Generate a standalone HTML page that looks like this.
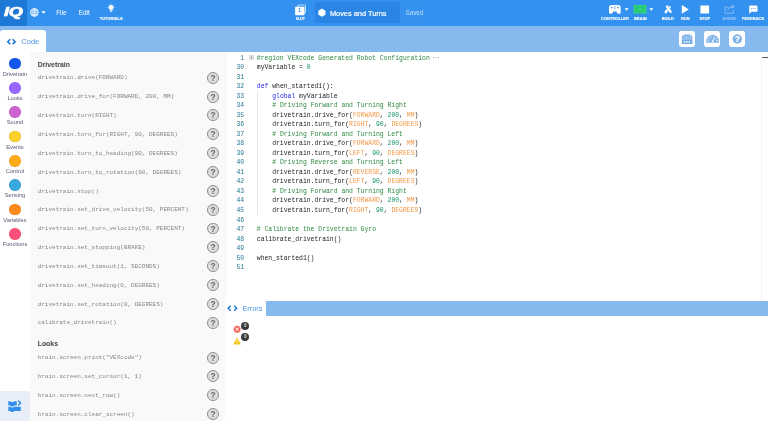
<!DOCTYPE html>
<html lang="en">
<head>
<meta charset="utf-8">
<title>VEXcode IQ - Moves and Turns</title>
<style>
*{box-sizing:border-box;margin:0;padding:0}
html,body{width:768px;height:421px;overflow:hidden;background:#fff}
body{position:relative;font-family:"Liberation Sans",sans-serif;color:#333}
.abs{position:absolute}
#topbar{position:absolute;left:0;top:0;width:768px;height:25.600px;background:#3391ef}
#logo{position:absolute;left:0;top:0;width:26.700px;height:25.600px;background:#1d78d6}
#logo span{position:absolute;left:3.6px;top:6.3px;font:italic bold 12px/12px "Liberation Sans",sans-serif;color:#fff;letter-spacing:-0.2px;-webkit-text-stroke:0.7px #fff;transform:scaleX(1.5);transform-origin:0 50%}
.menu{position:absolute;top:8px;font-size:6.4px;line-height:9px;color:#fff}
.tlabel{position:absolute;top:17.3px;font-size:4px;line-height:4px;font-weight:bold;-webkit-text-stroke:0.12px currentColor;color:#fff;text-align:center;white-space:nowrap;transform:translateX(-50%)}
.tlabel.dim{color:#8fc1f5}
#proj{position:absolute;left:315.200px;top:2.400px;width:84.500px;height:21px;background:#2a85e5;border-radius:2px 0 0 2px}
#proj span{position:absolute;left:14.7px;top:6.3px;font-size:7.4px;line-height:10px;color:#fff;-webkit-text-stroke:0.2px #fff;white-space:nowrap}
#saved{position:absolute;left:399.700px;top:2.400px;width:26px;height:21px;background:#3592ef;border-radius:0 2px 2px 0}
#saved span{position:absolute;left:5.800px;top:5.900px;font-size:6.3px;line-height:9px;color:#c3defa;white-space:nowrap}
#bar2{position:absolute;left:0;top:25.600px;width:768px;height:26.600px;background:#86baee}
#codetab{position:absolute;left:0;top:30px;width:46px;height:22px;background:#fff;border-radius:3px 3px 0 0}
#codetab span{position:absolute;left:21.2px;top:6.6px;font-size:7.6px;line-height:10px;color:#4b97e4}
.sqbtn{position:absolute;top:31px;width:16.1px;height:16.4px;background:#fff;border-radius:2.4px}
#leftcol{position:absolute;left:0;top:52px;width:29.5px;height:369px;background:#fff}
#list{position:absolute;left:29.5px;top:52px;width:197.1px;height:369px;background:#f9f9f9}
.cat{position:absolute;left:0;width:30px;text-align:center}
.cat i{display:block;width:11.7px;height:11.7px;border-radius:50%;margin:0 auto;position:relative;left:-0.2px;box-shadow:inset 0 0 0 0.5px rgba(0,0,0,0.13)}
.cat b{display:block;font-weight:normal;font-size:5.7px;line-height:6px;margin-top:1.2px;color:#555c70;white-space:nowrap}
.hd{position:absolute;left:37.7px;font-size:6.9px;line-height:9px;font-weight:bold;color:#444;white-space:nowrap}
.it{position:absolute;left:37.7px;font-family:"Liberation Mono",monospace;font-size:5.99px;line-height:8px;color:#858585;white-space:nowrap}
.q{position:absolute;left:207.05px;width:11.9px;height:11.9px;border-radius:50%;background:#dedede;border:0.8px solid #8c8c8c;color:#666;font-size:8.4px;line-height:10.6px;text-align:center;font-weight:bold}
#toolbox{position:absolute;left:0;top:391.200px;width:29.500px;height:30px;background:#e8eff8}
#editor{position:absolute;left:226.6px;top:52px;width:541.4px;height:249px;background:#fff}
.ln{position:absolute;left:225px;width:19.2px;text-align:right;font-family:"Liberation Mono",monospace;font-size:6.4px;line-height:9.52px;color:#237893;white-space:pre}
.cl{position:absolute;left:256.8px;font-family:"Liberation Mono",monospace;font-size:6.42px;line-height:9.52px;color:#222;white-space:pre}
.cm{color:#2e8a42}.kw{color:#1c1ce8}.cn{color:#f39a4a}.nm{color:#179267}
#errbar{position:absolute;left:225px;top:301px;width:543px;height:15px;background:#86baee}
#errtab{position:absolute;left:225px;top:301px;width:40.5px;height:15px;background:#fff}
#errtab span{position:absolute;left:17.4px;top:3px;font-size:7.4px;line-height:9px;color:#4b97e4}
#console{position:absolute;left:225px;top:316px;width:543px;height:105px;background:#fff}
.badge{position:absolute;width:8px;height:8px;border-radius:50%;background:#3a3a3a;color:#ddd;font-size:4.6px;line-height:8px;text-align:center;font-weight:bold}
.it,.cl,.ln,.tlabel,.cat b,.hd,.menu,#proj span,#saved span,#codetab span,#errtab span,.q{filter:blur(0.28px)}
</style>
</head>
<body>
<div id="topbar">
  <div id="logo"><span>IQ</span></div>
  <div class="menu" style="left:56.2px">File</div>
  <div class="menu" style="left:78.8px">Edit</div>
  <div class="tlabel" style="left:111.2px">TUTORIALS</div>
  <div class="tlabel" style="left:300.300px;font-size:3.500px;top:17.400px">SLOT</div>
  <div id="proj"><span>Moves and Turns</span></div>
  <div id="saved"><span>Saved</span></div>
  <div class="tlabel" style="left:615px">CONTROLLER</div>
  <div class="tlabel" style="left:640.3px">BRAIN</div>
  <div class="tlabel" style="left:667.8px">BUILD</div>
  <div class="tlabel" style="left:685.3px">RUN</div>
  <div class="tlabel" style="left:704.8px">STOP</div>
  <div class="tlabel dim" style="left:729.3px">SHARE</div>
  <div class="tlabel" style="left:753.2px">FEEDBACK</div>
</div>
<div id="bar2"></div>
<div id="codetab"><span>Code</span></div>
<div class="sqbtn" style="left:679.2px"></div>
<div class="sqbtn" style="left:704.2px"></div>
<div class="sqbtn" style="left:729px"></div>
<div id="leftcol"></div>
<div id="list"></div>
<div id="toolbox"></div>
<div id="editor"></div>
<div id="errbar"></div>
<div id="errtab"><span>Errors</span></div>
<div id="console"></div>
<!--LEFT-->
<div class="cat" style="top:57.65px"><i style="background:#1358ee"></i><b>Drivetrain</b></div>
<div class="cat" style="top:82.00px"><i style="background:#9966ff"></i><b>Looks</b></div>
<div class="cat" style="top:106.35px"><i style="background:#cf63cf"></i><b>Sound</b></div>
<div class="cat" style="top:130.70px"><i style="background:#ffd12b"></i><b>Events</b></div>
<div class="cat" style="top:155.05px"><i style="background:#ffab19"></i><b>Control</b></div>
<div class="cat" style="top:179.40px"><i style="background:#3aa8e0"></i><b>Sensing</b></div>
<div class="cat" style="top:203.75px"><i style="background:#ff8c1a"></i><b>Variables</b></div>
<div class="cat" style="top:228.10px"><i style="background:#ff4f7b"></i><b>Functions</b></div>
<div class="hd" style="top:59.70px">Drivetrain</div>
<div class="it" style="top:74.40px">drivetrain.drive(FORWARD)</div>
<div class="q" style="top:71.75px">?</div>
<div class="it" style="top:93.30px">drivetrain.drive_for(FORWARD, 200, MM)</div>
<div class="q" style="top:90.65px">?</div>
<div class="it" style="top:112.10px">drivetrain.turn(RIGHT)</div>
<div class="q" style="top:109.45px">?</div>
<div class="it" style="top:130.90px">drivetrain.turn_for(RIGHT, 90, DEGREES)</div>
<div class="q" style="top:128.25px">?</div>
<div class="it" style="top:149.70px">drivetrain.turn_to_heading(90, DEGREES)</div>
<div class="q" style="top:147.05px">?</div>
<div class="it" style="top:168.60px">drivetrain.turn_to_rotation(90, DEGREES)</div>
<div class="q" style="top:165.95px">?</div>
<div class="it" style="top:187.50px">drivetrain.stop()</div>
<div class="q" style="top:184.85px">?</div>
<div class="it" style="top:206.30px">drivetrain.set_drive_velocity(50, PERCENT)</div>
<div class="q" style="top:203.65px">?</div>
<div class="it" style="top:225.20px">drivetrain.set_turn_velocity(50, PERCENT)</div>
<div class="q" style="top:222.55px">?</div>
<div class="it" style="top:244.00px">drivetrain.set_stopping(BRAKE)</div>
<div class="q" style="top:241.35px">?</div>
<div class="it" style="top:262.90px">drivetrain.set_timeout(1, SECONDS)</div>
<div class="q" style="top:260.25px">?</div>
<div class="it" style="top:281.70px">drivetrain.set_heading(0, DEGREES)</div>
<div class="q" style="top:279.05px">?</div>
<div class="it" style="top:300.60px">drivetrain.set_rotation(0, DEGREES)</div>
<div class="q" style="top:297.95px">?</div>
<div class="it" style="top:319.40px">calibrate_drivetrain()</div>
<div class="q" style="top:316.75px">?</div>
<div class="hd" style="top:339.30px">Looks</div>
<div class="it" style="top:354.30px">brain.screen.print(&quot;VEXcode&quot;)</div>
<div class="q" style="top:351.65px">?</div>
<div class="it" style="top:373.10px">brain.screen.set_cursor(1, 1)</div>
<div class="q" style="top:370.45px">?</div>
<div class="it" style="top:391.90px">brain.screen.next_row()</div>
<div class="q" style="top:389.25px">?</div>
<div class="it" style="top:410.70px">brain.screen.clear_screen()</div>
<div class="q" style="top:408.05px">?</div>
<!--/LEFT-->
<!--CODE-->
<div class="ln" style="top:53.53px">1</div>
<div class="cl" style="top:53.53px"><span class="cm">#region VEXcode Generated Robot Configuration</span><span style="color:#9a9a9a;letter-spacing:-1.6px"> ···</span></div>
<div class="ln" style="top:63.06px">30</div>
<div class="cl" style="top:63.06px">myVariable = <span class="nm">0</span></div>
<div class="ln" style="top:72.59px">31</div>
<div class="ln" style="top:82.12px">32</div>
<div class="cl" style="top:82.12px"><span class="kw">def</span> when_started1():</div>
<div class="ln" style="top:91.65px">33</div>
<div class="cl" style="top:91.65px">    <span class="kw">global</span> myVariable</div>
<div class="ln" style="top:101.18px">34</div>
<div class="cl" style="top:101.18px">    <span class="cm"># Driving Forward and Turning Right</span></div>
<div class="ln" style="top:110.71px">35</div>
<div class="cl" style="top:110.71px">    drivetrain.drive_for(<span class="cn">FORWARD</span>, <span class="nm">200</span>, <span class="cn">MM</span>)</div>
<div class="ln" style="top:120.24px">36</div>
<div class="cl" style="top:120.24px">    drivetrain.turn_for(<span class="cn">RIGHT</span>, <span class="nm">90</span>, <span class="cn">DEGREES</span>)</div>
<div class="ln" style="top:129.78px">37</div>
<div class="cl" style="top:129.78px">    <span class="cm"># Driving Forward and Turning Left</span></div>
<div class="ln" style="top:139.31px">38</div>
<div class="cl" style="top:139.31px">    drivetrain.drive_for(<span class="cn">FORWARD</span>, <span class="nm">200</span>, <span class="cn">MM</span>)</div>
<div class="ln" style="top:148.84px">39</div>
<div class="cl" style="top:148.84px">    drivetrain.turn_for(<span class="cn">LEFT</span>, <span class="nm">90</span>, <span class="cn">DEGREES</span>)</div>
<div class="ln" style="top:158.37px">40</div>
<div class="cl" style="top:158.37px">    <span class="cm"># Driving Reverse and Turning Left</span></div>
<div class="ln" style="top:167.89px">41</div>
<div class="cl" style="top:167.89px">    drivetrain.drive_for(<span class="cn">REVERSE</span>, <span class="nm">200</span>, <span class="cn">MM</span>)</div>
<div class="ln" style="top:177.43px">42</div>
<div class="cl" style="top:177.43px">    drivetrain.turn_for(<span class="cn">LEFT</span>, <span class="nm">90</span>, <span class="cn">DEGREES</span>)</div>
<div class="ln" style="top:186.95px">43</div>
<div class="cl" style="top:186.95px">    <span class="cm"># Driving Forward and Turning Right</span></div>
<div class="ln" style="top:196.49px">44</div>
<div class="cl" style="top:196.49px">    drivetrain.drive_for(<span class="cn">FORWARD</span>, <span class="nm">200</span>, <span class="cn">MM</span>)</div>
<div class="ln" style="top:206.01px">45</div>
<div class="cl" style="top:206.01px">    drivetrain.turn_for(<span class="cn">RIGHT</span>, <span class="nm">90</span>, <span class="cn">DEGREES</span>)</div>
<div class="ln" style="top:215.55px">46</div>
<div class="ln" style="top:225.07px">47</div>
<div class="cl" style="top:225.07px"><span class="cm"># Calibrate the Drivetrain Gyro</span></div>
<div class="ln" style="top:234.61px">48</div>
<div class="cl" style="top:234.61px">calibrate_drivetrain()</div>
<div class="ln" style="top:244.13px">49</div>
<div class="ln" style="top:253.67px">50</div>
<div class="cl" style="top:253.67px">when_started1()</div>
<div class="ln" style="top:263.19px">51</div>
<!--/CODE-->
<div class="abs" style="left:761.5px;top:56.8px;width:6.5px;height:1.1px;background:#555"></div>
<div class="abs" style="left:761px;top:58px;width:0.8px;height:243px;background:#f1f2f5"></div>
<div class="abs" style="left:249.4px;top:55px;width:4.5px;height:4.5px;background:#dcdcdc"></div>
<div class="abs" style="left:251px;top:56.6px;width:1.3px;height:1.3px;background:#777"></div>
<div class="abs" style="left:257.4px;top:90.5px;width:0.6px;height:124px;background:#e6e6e6"></div>
<!--ICONS-->
<svg class="abs" style="left:0;top:0" width="768" height="54" viewBox="0 0 768 54">
  <!-- globe -->
  <g fill="none" stroke="#fff" stroke-width="0.9">
    <circle cx="34.4" cy="12.4" r="3.9"/>
    <ellipse cx="34.4" cy="12.4" rx="1.7" ry="3.9" stroke-width="0.7"/>
    <path d="M30.5 12.4h7.8M31.2 10.4h6.4M31.2 14.4h6.4M34.4 8.5v7.8" stroke-width="0.7"/>
  </g>
  <path d="M41.3 11.2h4.4l-2.2 2.6z" fill="#fff"/>
  <!-- bulb -->
  <g fill="#fff">
    <path d="M111.100 4.800a2.500 2.500 0 0 1 1.450 4.550v1.150h-2.900v-1.150a2.500 2.500 0 0 1 1.450-4.550z"/>
    <rect x="109.900" y="11" width="2.400" height="0.800" rx="0.300"/>
  </g>
  <g stroke="#fff" stroke-width="0.500" stroke-linecap="round" opacity="0.600">
    <path d="M111.100 2.900v0.900M107.100 7.400h0.900M114.300 7.400h0.900M108.200 4.500l.7.700M114 4.500l-.7.700M108.200 10.300l.7-.7M114 10.300l-.7-.7"/>
  </g>
  <!-- slot -->
  <rect x="297.800" y="5" width="7.700" height="7.700" rx="0.700" fill="none" stroke="#fff" stroke-width="0.800" opacity="0.850"/>
  <rect x="295.100" y="6.800" width="9.400" height="8.500" rx="0.700" fill="#fff"/>
  <text x="299.300" y="11.700" font-family="Liberation Sans, sans-serif" font-weight="bold" font-size="5.400" fill="#3391ef" text-anchor="middle">1</text>
  <!-- hexagon -->
  <path d="M321.900 8.600l3.550 2.050v4.100l-3.550 2.050-3.550-2.050v-4.100z" fill="#fff"/>
  <!-- controller -->
  <path d="M611.4 4.9h6.9c1.5 0 2.4 1 2.4 2.4v5.2c0 .8-.5 1.2-1.200 1.200h-1.300c-.6 0-.9-.3-1.100-.8l-.5-1.300h-3.500l-.5 1.300c-.2.5-.5.8-1.100.8h-1.300c-.7 0-1.200-.4-1.200-1.200v-5.200c0-1.400.9-2.400 2.400-2.400z" fill="#fff"/>
  <g fill="#3391ef"><circle cx="611.7" cy="7.6" r="0.8"/><circle cx="618" cy="7.600" r="0.8"/><rect x="613.9" y="6.600" width="1.9" height="0.7"/><rect x="614.3" y="8.3" width="1.100" height="1.100"/></g>
  <path d="M624.6 8.2h4l-2 2.500z" fill="#fff"/>
  <!-- brain -->
  <rect x="633.5" y="4.900" width="13" height="8.500" rx="0.5" fill="#2fd27c"/>
  <rect x="636.4" y="7.200" width="6.800" height="4.200" fill="none" stroke="#24b56b" stroke-width="0.700"/>
  <path d="M649.300 8.200h4l-2 2.500z" fill="#fff"/>
  <!-- build -->
  <g fill="none" stroke="#fff" stroke-linecap="round">
    <path d="M667.300 6.700l3.300 5" stroke-width="2.700"/>
    <path d="M669.600 7.400l-3.800 4.600" stroke-width="2.600"/>
    <path d="M668.300 6.300l3.600 5.400" stroke="#3391ef" stroke-width="0.500"/>
    <path d="M666.500 8.600l2.800 4" stroke="#3391ef" stroke-width="0.450"/>
  </g>
  <!-- run -->
  <path d="M681.800 5.100l7 4.300-7 4.300z" fill="#fff"/>
  <!-- stop -->
  <rect x="700.400" y="5.400" width="8.700" height="8.100" rx="0.300" fill="#fff"/>
  <!-- share -->
  <g fill="none" stroke="#8fc0f3" stroke-width="0.900">
    <path d="M728.500 7h-3.500v6.200h8.300v-3.200"/>
    <path d="M727.800 10.600c.2-2.600 1.900-3.800 4.300-3.800"/>
  </g>
  <path d="M731.600 4.800l3 2-3 2z" fill="#8fc0f3"/>
  <!-- feedback -->
  <path d="M749.800 5.400h7.100c.4 0 .600.200.600.600v5.200c0 .4-.2.600-.600.600h-5.200l-2.500 1.900v-7.700c0-.4.200-.6.600-.6z" fill="#fff"/>
  <g fill="#3391ef"><circle cx="751.600" cy="8.600" r="0.500"/><circle cx="753.400" cy="8.600" r="0.500"/><circle cx="755.200" cy="8.600" r="0.500"/></g>
  <!-- code tab chevrons -->
  <g fill="none" stroke="#1b73d6" stroke-width="1.500">
    <path d="M10.300 39.300l-2.600 2.400 2.600 2.400M12.600 39.300l2.600 2.400-2.600 2.400"/>
  </g>
  <!-- button 1: device -->
  <g>
    <rect x="683.900" y="34.400" width="6.400" height="2" rx="0.400" fill="#80b4ea"/>
    <rect x="681.900" y="35.500" width="10.400" height="8.400" rx="0.600" fill="#7fb3ea"/>
    <rect x="682.700" y="36.300" width="8.800" height="3.600" fill="#93c0ee"/>
    <rect x="681.900" y="40.200" width="10.400" height="3.700" rx="0.400" fill="#6eaae8"/>
    <g fill="#fff"><rect x="683.750" y="41" width="1.300" height="1.800"/><rect x="686.250" y="41" width="1.300" height="1.800"/><rect x="688.700" y="41" width="1.300" height="1.800"/></g>
  </g>
  <!-- button 2: gauge -->
  <g>
    <path d="M706.200 42.700v-1.500a6.400 6.400 0 0 1 12.800 0v1.500z" fill="#7fb3ea"/>
    <g stroke="#fff" stroke-width="0.700" stroke-linecap="round" fill="none">
      <path d="M707.500 40.900h1.300M708.300 38.100l1.100.8M710.600 36.300l.6 1.200M714.600 36.300l-.6 1.200M716.900 38.100l-1.100.8M717.700 40.900h-1.300"/>
      <path d="M712.600 41.400l1.500-3" stroke-width="0.900"/>
    </g>
    <circle cx="712.600" cy="41.400" r="0.900" fill="#fff"/>
  </g>
  <!-- button 3: help -->
  <circle cx="737.300" cy="39" r="4.700" fill="#7fb3ea"/>
  <text x="737.300" y="41.900" font-family="Liberation Sans, sans-serif" font-weight="bold" font-size="8.200" fill="#fff" stroke="#fff" stroke-width="0.200" text-anchor="middle">?</text>
</svg>
<!-- toolbox icon -->
<svg class="abs" style="left:0;top:391px" width="30" height="30" viewBox="0 391 30 30">
  <g fill="#2f8fea">
    <path d="M8.300 401.200h2.200l.6.800h2.400l.6-.8h2.600v4.300h-2.600l-.6.900h-2.400l-.6-.9h-2.200z"/>
    <path d="M8.300 406.800h2.200l.6.800h2.400l.6-.8h6.700v4.300h-6.700l-.6.900h-2.400l-.6-.9h-2.200z"/>
  </g>
  <path d="M18.100 400.500l2.500 2.500-2.500 2.500" fill="none" stroke="#2f8fea" stroke-width="1.400"/>
</svg>
<!-- errors -->
<svg class="abs" style="left:225px;top:301px" width="60" height="50" viewBox="225 301 60 50">
  <g fill="none" stroke="#1b73d6" stroke-width="1.400">
    <path d="M230.700 305.800l-2.500 2.500 2.500 2.500M234.200 305.800l2.500 2.500-2.500 2.500"/>
  </g>
  <circle cx="237.100" cy="329.200" r="3.500" fill="#f0655a"/>
  <path d="M235.600 327.700l3 3M238.600 327.700l-3 3" stroke="#fff" stroke-width="1" stroke-linecap="round"/>
  <path d="M237.100 337.600l3.900 6.900h-7.800z" fill="#f5c518"/>
  <path d="M237.100 340v2.400M237.100 343.300v.5" stroke="#fff" stroke-width="0.800"/>
</svg>
<div class="badge" style="left:241.200px;top:321.500px">0</div>
<div class="badge" style="left:241.200px;top:333.300px">0</div>

<!--/ICONS-->
</body>
</html>
